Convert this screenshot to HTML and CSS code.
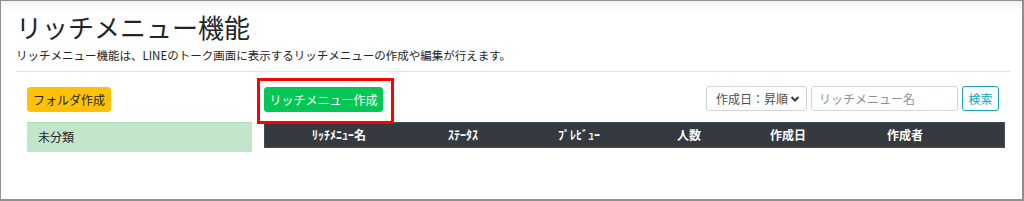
FILE: index.html
```html
<!DOCTYPE html>
<html lang="ja">
<head>
<meta charset="utf-8">
<title>リッチメニュー機能</title>
<link rel="stylesheet" href="styles.css">
</head>
<body>
<div class="frame">
  <div class="container">
    <h1 class="title">リッチメニュー機能</h1>
    <p class="lead">リッチメニュー機能は、LINEのトーク画面に表示するリッチメニューの作成や編集が行えます。</p>
    <hr class="rule">
    <div class="layout">
      <div class="side">
        <div class="toolbar-left">
          <button class="btn btn-warning" type="button">フォルダ作成</button>
        </div>
        <div class="folder">未分類</div>
      </div>
      <div class="main">
        <div class="toolbar">
          <div class="highlight">
            <button class="btn btn-line" type="button">リッチメニュー作成</button>
          </div>
          <div class="search">
            <div class="select">
              <span>作成日：昇順</span>
              <svg class="chev" width="10" height="8" viewBox="0 0 10 8"><path d="M1.5 2 L5 5.5 L8.5 2" fill="none" stroke="#343a40" stroke-width="2"/></svg>
            </div>
            <div class="input">リッチメニュー名</div>
            <button class="btn btn-outline-info" type="button">検索</button>
          </div>
        </div>
        <div class="thead">
          <div class="th">ﾘｯﾁﾒﾆｭｰ名</div>
          <div class="th">ｽﾃｰﾀｽ</div>
          <div class="th">ﾌﾟﾚﾋﾞｭｰ</div>
          <div class="th">人数</div>
          <div class="th">作成日</div>
          <div class="th">作成者</div>
          <div class="th"></div>
        </div>
      </div>
    </div>
  </div>
</div>
</body>
</html>
```

FILE: styles.css
```css
* { box-sizing: border-box; }
html, body { margin: 0; padding: 0; background: #fff; }
body {
  font-family: "Noto Sans CJK JP", "Noto Sans", sans-serif;
  color: #212529;
  width: 1024px;
  height: 201px;
  overflow: hidden;
}
.frame {
  width: 1024px;
  height: 201px;
  border-style: solid;
  border-color: #8f8f8f;
  border-width: 1px 2px 2px 1px;
  background: linear-gradient(#f0f0f0 0px, #fff 10px);
}
.container {
  padding: 0 12px 0 15px;
}
.title {
  margin: 0;
  padding-top: 8px;
  font-size: 26px;
  line-height: 36px;
  font-weight: 400;
  color: #212529;
}
.lead {
  margin: 2px 0 0 0;
  font-size: 11.5px;
  line-height: 16px;
  color: #212529;
}
.rule {
  margin: 8px 0 0 0;
  border: 0;
  border-top: 1px solid #e3e3e3;
  height: 0;
}
.layout {
  display: grid;
  grid-template-columns: 225px 741px;
  column-gap: 12px;
  padding-left: 11px;
  margin-top: 14px;
}
.toolbar-left {
  height: 36px;
}
.btn {
  font-family: "Noto Sans CJK JP", "Noto Sans", sans-serif;
  font-size: 12px;
  line-height: 23px;
  height: 25px;
  padding: 0 9px;
  border: 1px solid transparent;
  border-radius: 3px;
  cursor: pointer;
}
.btn-warning {
  background: #ffc107;
  border-color: #ffc107;
  color: #212529;
  width: 84px;
  padding: 0;
}
.folder {
  height: 30px;
  background: #c3e6cb;
  border: 1px solid #c3e6cb;
  border-top-color: #a9dbb4;
  padding-left: 10px;
  font-size: 12px;
  line-height: 28px;
  color: #212529;
}
.toolbar {
  display: flex;
  justify-content: space-between;
  align-items: flex-start;
  height: 36px;
  padding-right: 6px;
}
.highlight {
  position: relative;
  width: 119px;
  height: 26px;
}
.highlight::after {
  content: "";
  position: absolute;
  left: -7px;
  top: -8px;
  width: 131px;
  height: 40px;
  border: 3px solid #ff0000;
  pointer-events: none;
}
.btn-line {
  background: #06c755;
  border-color: #06c755;
  color: #fff;
  width: 119px;
  padding: 0;
}
.search {
  display: flex;
  align-items: center;
  gap: 4px;
}
.select {
  width: 101px;
  height: 25px;
  border: 1px solid #ced4da;
  border-radius: 3px;
  display: flex;
  align-items: center;
  justify-content: space-between;
  padding: 0 6px 0 9px;
  font-size: 12px;
  color: #495057;
}
.chev { display: block; }
.input {
  width: 147px;
  height: 25px;
  border: 1px solid #ced4da;
  border-radius: 3px;
  padding-left: 7px;
  font-size: 12px;
  line-height: 23px;
  color: #8a9096;
}
.btn-outline-info {
  background: #fff;
  border-color: #17a2b8;
  color: #17a2b8;
  width: 37px;
  padding: 0;
}
.thead {
  display: grid;
  grid-template-columns: 148px 100px 132px 88px 110px 124px 1fr;
  height: 26px;
  background: #343a40;
  border: 1px solid #454d55;
}
.th {
  text-align: center;
  color: #fff;
  font-weight: 700;
  font-size: 12px;
  line-height: 24px;
}
```
